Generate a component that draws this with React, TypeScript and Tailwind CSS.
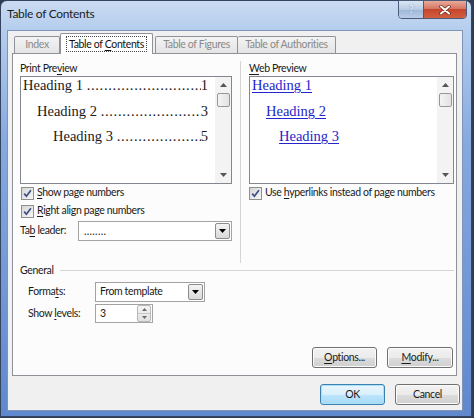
import React from "react";

const SANS = { fontFamily: 'Lato, "Open Sans", sans-serif' };
const SERIF = { fontFamily: '"Liberation Serif", "DejaVu Serif", serif' };

function U({ children }: { children: React.ReactNode }) {
  return <span className="underline underline-offset-[2px] decoration-[1px]">{children}</span>;
}

function Check() {
  return (
    <span className="flex h-[13px] w-[13px] shrink-0 items-center justify-center border border-[#8e8f8f] bg-[linear-gradient(135deg,#d6d6d6,#f7f7f7)]">
      <svg width="9" height="9" viewBox="0 0 9 9">
        <path d="M1.2 4.6 L3.4 7.2 L7.9 1.2" stroke="#3b4d85" strokeWidth="1.7" fill="none" />
      </svg>
    </span>
  );
}

function DownTri({ color = "#000" }: { color?: string }) {
  return (
    <svg width="7" height="4" viewBox="0 0 7 4">
      <polygon points="0,0 7,0 3.5,4" fill={color} />
    </svg>
  );
}

function UpTri({ color = "#000" }: { color?: string }) {
  return (
    <svg width="7" height="4" viewBox="0 0 7 4">
      <polygon points="0,4 7,4 3.5,0" fill={color} />
    </svg>
  );
}

function ScrollBar() {
  return (
    <div className="flex w-[16px] shrink-0 flex-col items-center bg-[#f3f3f3]">
      <div className="mt-[5px] flex h-[6px] items-center">
        <UpTri color="#555" />
      </div>
      <div className="mt-[5px] h-[14px] w-[13px] rounded-[2px] border border-[#979797] bg-[linear-gradient(90deg,#f4f4f4,#e2e2e2)]" />
      <div className="flex-1" />
      <div className="mb-[5px] flex h-[6px] items-center">
        <DownTri color="#555" />
      </div>
    </div>
  );
}

function DropArrowBtn() {
  return (
    <div className="flex h-[16px] w-[15px] shrink-0 items-center justify-center rounded-[2px] border border-[#8c8c8c] bg-[linear-gradient(180deg,#f4f4f4,#d9d9d9)]">
      <DownTri />
    </div>
  );
}

function PrintRow({ label, num, indent }: { label: string; num: string; indent: string }) {
  return (
    <div className={`flex h-[20px] items-center text-[14.5px] leading-[20px] text-[#1a1a1a] ${indent}`}>
      <span className="shrink-0 whitespace-nowrap">{label}&nbsp;</span>
      <span className="min-w-0 flex-1 overflow-hidden whitespace-nowrap tracking-[0.7px]">
        ..............................................................................
      </span>
      <span className="shrink-0">{num}</span>
    </div>
  );
}

function WebRow({ label, indent }: { label: string; indent: string }) {
  return (
    <div className={`flex h-[20px] items-center text-[14.5px] leading-[20px] ${indent}`}>
      <span className="whitespace-nowrap text-[#2424cc] underline decoration-[1px] underline-offset-[2px]">{label}</span>
    </div>
  );
}

function Btn({ children, focus = false, w }: { children: React.ReactNode; focus?: boolean; w: string }) {
  return (
    <div
      className={`flex h-[21px] ${w} items-center justify-center whitespace-nowrap rounded-[3px] border text-[#1a1a1a] ${
        focus
          ? "border-[#3c7fb1] bg-[linear-gradient(180deg,#eaf6fd_0%,#d9f0fc_50%,#bee6fd_51%,#a7d9f5_100%)] shadow-[inset_0_0_0_1px_#a9e1f7]"
          : "border-[#707070] bg-[linear-gradient(180deg,#f2f2f2_0%,#ebebeb_50%,#dddddd_51%,#cfcfcf_100%)] shadow-[inset_0_0_0_1px_#fbfbfb]"
      }`}
    >
      {children}
    </div>
  );
}

export default function App() {
  return (
    <div
      className="h-[418px] w-[474px] overflow-hidden whitespace-nowrap bg-[#2f3e55] text-[10.5px] tracking-[-0.35px]"
      style={SANS}
    >
      <div className="flex h-[417px] w-[472px] flex-col rounded-t-[7px] border border-[#34445f] bg-[linear-gradient(180deg,#c9dbf1_0px,#b4cdee_30px,#86a9df_140px,#5f88cd_100%)]">
        {/* Title bar */}
        <div className="flex h-[29px] items-start">
          <div className="pl-[6px] pt-[5px] text-[12px] leading-[16px] tracking-[-0.3px] text-[#1c1c1c]">
            Table of Contents
          </div>
          <div className="flex-1" />
          <div className="mr-[4px] mt-[-1px] flex h-[19px] overflow-hidden rounded-b-[4px] border border-[#4a5a78]">
            <div className="flex w-[25px] items-center justify-center border-r border-[#4a5a78] bg-[linear-gradient(180deg,#dbe6f4,#b7cae4_50%,#9fb6d8_51%,#b9cde8)] text-[11px] font-bold text-[#e9f0f9] [text-shadow:0_0_1px_#5a6e90]">
              ?
            </div>
            <div className="flex w-[42px] items-center justify-center bg-[linear-gradient(180deg,#e9a99a,#d47762_45%,#c6452d_50%,#d2603f_100%)]">
              <svg width="12" height="10" viewBox="0 0 12 10">
                <path d="M2 1.5 L10 8.5 M10 1.5 L2 8.5" stroke="#6b2418" strokeWidth="3.4" strokeLinecap="round" />
                <path d="M2 1.5 L10 8.5 M10 1.5 L2 8.5" stroke="#ffffff" strokeWidth="2" strokeLinecap="round" />
              </svg>
            </div>
          </div>
        </div>

        {/* Client area */}
        <div className="ml-[6px] flex h-[381px] w-[456px] flex-col border border-[#7f95b7] bg-[#f0f0f0] pt-[2px]">
          {/* Tabs */}
          <div className="relative z-10 flex items-end pl-[6px]">
            <div className="flex h-[17px] w-[46px] items-center justify-center rounded-t-[2px] border border-b-0 border-[#8e9198] bg-[linear-gradient(180deg,#f3f3f3,#e4e4e4)] text-[#8a8a8a]">
              Index
            </div>
            <div className="mb-[-1px] flex h-[21px] w-[93px] items-center justify-center rounded-t-[2px] border border-b-0 border-[#8e9198] bg-white text-[#111]">
              <span className="border border-dotted border-[#444] px-[2px] leading-[14px]">
                Table of <U>C</U>ontents
              </span>
            </div>
            <div className="ml-[2px] flex h-[17px] w-[83px] items-center justify-center rounded-t-[2px] border border-b-0 border-[#8e9198] bg-[linear-gradient(180deg,#f3f3f3,#e4e4e4)] text-[#8a8a8a]">
              Table of Figures
            </div>
            <div className="flex h-[17px] w-[98px] items-center justify-center rounded-t-[2px] border border-b-0 border-l-0 border-[#8e9198] bg-[linear-gradient(180deg,#f3f3f3,#e4e4e4)] text-[#8a8a8a]">
              Table of Authorities
            </div>
          </div>

          {/* Panel */}
          <div className="ml-[4px] flex h-[323px] w-[445px] flex-col border border-[#8e9198] bg-[#fcfcfc] text-[#1a1a1a]">
            {/* Top section */}
            <div className="flex h-[209px] pt-[7px]">
              {/* Left column */}
              <div className="ml-[7px] flex w-[212px] flex-col">
                <div className="h-[14px] leading-[14px]">
                  Print Pre<U>v</U>iew
                </div>
                <div className="mt-[1px] flex h-[108px] border border-[#828790] bg-white tracking-normal">
                  <div className="-mt-[2px] flex min-w-0 flex-1 flex-col gap-[5.5px] pl-[2px] pr-[7px]" style={SERIF}>
                    <PrintRow label="Heading 1" num="1" indent="" />
                    <PrintRow label="Heading 2" num="3" indent="pl-[14px]" />
                    <PrintRow label="Heading 3" num="5" indent="pl-[30px]" />
                  </div>
                  <ScrollBar />
                </div>
                <div className="mt-[1px] flex h-[16px] items-center gap-[3px] pl-[1px]">
                  <Check />
                  <span>
                    <U>S</U>how page numbers
                  </span>
                </div>
                <div className="mt-[2px] flex h-[16px] items-center gap-[3px] pl-[1px]">
                  <Check />
                  <span>
                    <U>R</U>ight align page numbers
                  </span>
                </div>
                <div className="mt-[2px] flex h-[20px] items-center">
                  <span className="w-[58px] shrink-0">
                    Ta<U>b</U> leader:
                  </span>
                  <div className="flex h-[20px] min-w-0 flex-1 items-center border border-[#a3a3a3] bg-white pl-[5px] pr-[1px]">
                    <span className="flex-1 leading-[14px] tracking-[0.3px]">........</span>
                    <DropArrowBtn />
                  </div>
                </div>
              </div>
              {/* Separator */}
              <div className="ml-[8px] h-[202px] w-[1px] bg-[#d5d5d5]" />
              {/* Right column */}
              <div className="ml-[8px] flex w-[205px] flex-col">
                <div className="h-[14px] leading-[14px]">
                  <U>W</U>eb Preview
                </div>
                <div className="mt-[1px] flex h-[108px] border border-[#828790] bg-white tracking-normal">
                  <div className="-mt-[2px] flex min-w-0 flex-1 flex-col gap-[5.5px] pl-[2px]" style={SERIF}>
                    <WebRow label="Heading 1" indent="" />
                    <WebRow label="Heading 2" indent="pl-[14px]" />
                    <WebRow label="Heading 3" indent="pl-[27px]" />
                  </div>
                  <ScrollBar />
                </div>
                <div className="mt-[1px] flex h-[16px] items-center gap-[3px]">
                  <Check />
                  <span>
                    Use <U>h</U>yperlinks instead of page numbers
                  </span>
                </div>
              </div>
            </div>

            {/* General */}
            <div className="flex h-[14px] items-center pl-[7px] pr-[2px]">
              <span className="leading-[14px]">General</span>
              <div className="ml-[6px] h-[1px] flex-1 bg-[#d5d5d5]" />
            </div>
            <div className="mt-[5px] flex h-[20px] items-center pl-[15px]">
              <span className="w-[67px]">
                Forma<U>t</U>s:
              </span>
              <div className="flex h-[20px] w-[110px] items-center border border-[#a3a3a3] bg-white pl-[4px] pr-[1px]">
                <span className="flex-1">From template</span>
                <DropArrowBtn />
              </div>
            </div>
            <div className="mt-[2px] flex h-[19px] items-center pl-[15px]">
              <span className="w-[67px]">
                Show <U>l</U>evels:
              </span>
              <div className="flex h-[19px] w-[58px] items-center border border-[#a3a3a3] bg-white pl-[4px] pr-[1px]">
                <span className="flex-1">3</span>
                <div className="flex h-[17px] w-[14px] flex-col rounded-[2px] border border-[#b8b8b8] bg-[linear-gradient(180deg,#f4f4f4,#e2e2e2)]">
                  <div className="flex flex-1 items-center justify-center border-b border-[#c8c8c8]">
                    <svg width="5" height="3" viewBox="0 0 5 3">
                      <polygon points="0,3 5,3 2.5,0" fill="#6a6a6a" />
                    </svg>
                  </div>
                  <div className="flex flex-1 items-center justify-center">
                    <svg width="5" height="3" viewBox="0 0 5 3">
                      <polygon points="0,0 5,0 2.5,3" fill="#6a6a6a" />
                    </svg>
                  </div>
                </div>
              </div>
            </div>
            <div className="mt-[24px] flex justify-end gap-[10px] pr-[3px]">
              <Btn w="w-[65px]">
                <U>O</U>ptions...
              </Btn>
              <Btn w="w-[66px]">
                <U>M</U>odify...
              </Btn>
            </div>
          </div>

          {/* Dialog buttons */}
          <div className="mt-[8px] flex justify-end gap-[10px] pr-[2px]">
            <Btn w="w-[65px]" focus>
              OK
            </Btn>
            <Btn w="w-[65px]">Cancel</Btn>
          </div>
        </div>
      </div>
    </div>
  );
}
